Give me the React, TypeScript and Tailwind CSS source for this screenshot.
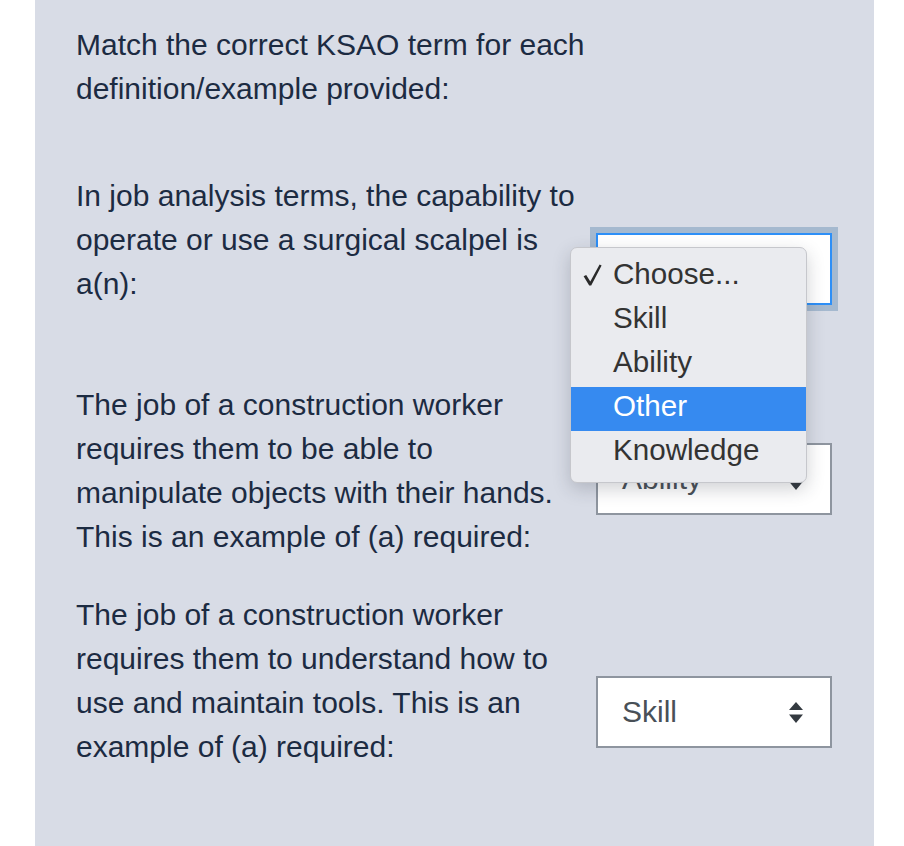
import React from "react";

function Arrows() {
  return (
    <svg width="14" height="21" viewBox="0 0 14 21" className="shrink-0">
      <path d="M7 0 L14 8 L0 8 Z" fill="#343a40" />
      <path d="M0 12.5 L14 12.5 L7 21 Z" fill="#343a40" />
    </svg>
  );
}

function Check() {
  return (
    <svg width="19" height="22" viewBox="0 0 19 22">
      <path
        d="M0.6 12.2 L3.2 11 L7.3 17.6 L16.6 0.4 L18.6 1.4 L8.2 21.6 L6.2 21.6 Z"
        fill="#2a2a2a"
      />
    </svg>
  );
}

function Select({ value, focused }: { value: string; focused?: boolean }) {
  return (
    <div
      className={
        focused
          ? "w-[236px] h-[72px] bg-white border-2 border-[#2d8ff7] shadow-[0_0_0_6px_#a5b9cf] flex items-center pl-[24px] pr-[27px] text-[#495057]"
          : "w-[236px] h-[72px] bg-white border-2 border-[#8e959f] flex items-center pl-[24px] pr-[27px] text-[#495057]"
      }
    >
      <span className="leading-[40px]">{value}</span>
      <span className="ml-auto flex">
        <Arrows />
      </span>
    </div>
  );
}

const options = ["Choose...", "Skill", "Ability", "Other", "Knowledge"];

function Menu() {
  return (
    <div className="absolute left-[-26px] top-[14px] z-10 w-[237px] h-[236px] rounded-[7px] border border-[#c6c7cc] bg-[#eaebef] py-[7px] shadow-[0_6px_18px_rgba(40,45,60,0.22)] text-[#333333] text-[29.6px]">
      {options.map((o, i) => (
        <div
          key={o}
          className={
            o === "Other"
              ? "relative h-[44px] pl-[42px] leading-[38px] bg-[#368af0] text-white"
              : "relative h-[44px] pl-[42px] leading-[38px]"
          }
        >
          {i === 0 && (
            <span className="absolute left-[12px] top-[9px] flex">
              <Check />
            </span>
          )}
          {o}
        </div>
      ))}
    </div>
  );
}

export default function App() {
  return (
    <div className="min-h-[846px] bg-white flex">
      <div className="ml-[35px] w-[839px] h-[846px] bg-[#d8dce6] pl-[41px] pr-[42px] pt-[23px] font-['Liberation_Sans',Arial,sans-serif] text-[#1c2b42] text-[30px] leading-[44px]">
        <p className="w-[600px]">
          Match the correct KSAO term for each definition/example provided:
        </p>

        <div className="mt-[63px] flex items-start">
          <p className="w-[505px]">
            In job analysis terms, the capability to operate or use a surgical
            scalpel is a(n):
          </p>
          <div className="relative ml-auto mt-[59px]">
            <Select value="Choose..." focused />
            <Menu />
          </div>
        </div>

        <div className="mt-[77px] flex items-start">
          <p className="w-[505px]">
            The job of a construction worker requires them to be able to
            manipulate objects with their hands. This is an example of (a)
            required:
          </p>
          <div className="ml-auto mt-[60px]">
            <Select value="Ability" />
          </div>
        </div>

        <div className="mt-[34px] flex items-start">
          <p className="w-[505px]">
            The job of a construction worker requires them to understand how to
            use and maintain tools. This is an example of (a) required:
          </p>
          <div className="ml-auto mt-[83px]">
            <Select value="Skill" />
          </div>
        </div>
      </div>
    </div>
  );
}
